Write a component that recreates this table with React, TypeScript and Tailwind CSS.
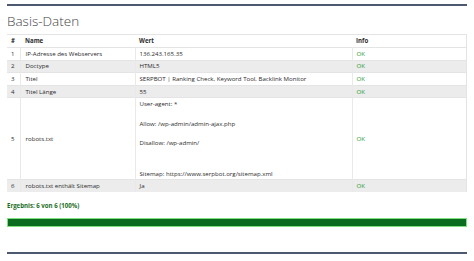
import React from 'react';

const rows: { n: number; name: string; value: React.ReactNode }[] = [
  { n: 1, name: 'IP-Adresse des Webservers', value: '136.243.165.35' },
  { n: 2, name: 'Doctype', value: 'HTML5' },
  { n: 3, name: 'Titel', value: 'SERPBOT | Ranking Check, Keyword Tool, Backlink Monitor' },
  { n: 4, name: 'Titel Länge', value: '55' },
  {
    n: 5,
    name: 'robots.txt',
    value: (
      <div className="flex flex-col leading-[9.6px] py-[1px]">
        <span>User-agent: *</span>
        <span>&nbsp;</span>
        <span>Allow: /wp-admin/admin-ajax.php</span>
        <span>&nbsp;</span>
        <span>Disallow: /wp-admin/</span>
        <span>&nbsp;</span>
        <span>&nbsp;</span>
        <span className="mt-[2px]">Sitemap: https://www.serpbot.org/sitemap.xml</span>
      </div>
    ),
  },
  { n: 6, name: 'robots.txt enthält Sitemap', value: 'Ja' },
];

export default function App() {
  return (
    <div className="w-[474px] h-[261px] bg-white px-[7px] pt-[4px] font-['Open_Sans',sans-serif] text-[#2b2b2b]">
      <div className="h-[2px] bg-[#4b5a6e]" />
      <h2 className="mt-[7px] text-[13.5px] leading-[16px] font-light text-[#444]">Basis-Daten</h2>
      <table className="mt-[5px] w-full border-collapse text-[6.1px] leading-[8px] table-fixed">
        <colgroup>
          <col className="w-[13px]" />
          <col className="w-[115px]" />
          <col className="w-[217px]" />
          <col />
        </colgroup>
        <thead>
          <tr className="h-[13px] border-t border-[#e4e4e4]">
            <th className="pl-[4px] text-left font-bold">#</th>
            <th className="pl-[5px] text-left font-bold">Name</th>
            <th className="pl-[4px] text-left font-bold">Wert</th>
            <th className="pl-[4px] text-left font-bold border-r border-[#e4e4e4]">Info</th>
          </tr>
        </thead>
        <tbody>
          {rows.map((r) => (
            <tr
              key={r.n}
              className={`border-t border-[#e4e4e4] ${r.n % 2 === 0 ? 'bg-[#ececec]' : 'bg-white'} ${r.n === 5 ? '' : 'h-[12.6px]'}`}
            >
              <td className="pl-[4px] border-r border-[#e9e9e9] align-middle">{r.n}</td>
              <td className="pl-[5px] border-r border-[#e9e9e9] align-middle">{r.name}</td>
              <td className="pl-[4px] border-r border-[#e9e9e9] align-middle">{r.value}</td>
              <td className="pl-[4px] text-[#2e9a3a] border-r border-[#e4e4e4] align-middle">OK</td>
            </tr>
          ))}
        </tbody>
      </table>
      <p className="mt-[9px] text-[6.1px] font-bold text-[#1c6e24]">Ergebnis: 6 von 6 (100%)</p>
      <div className="mt-[8px] h-[9px] bg-[#0b6c1f] border border-[#7fe07f]" />
      <div className="mt-[25px] h-[2px] bg-[#4b5a6e]" />
    </div>
  );
}
